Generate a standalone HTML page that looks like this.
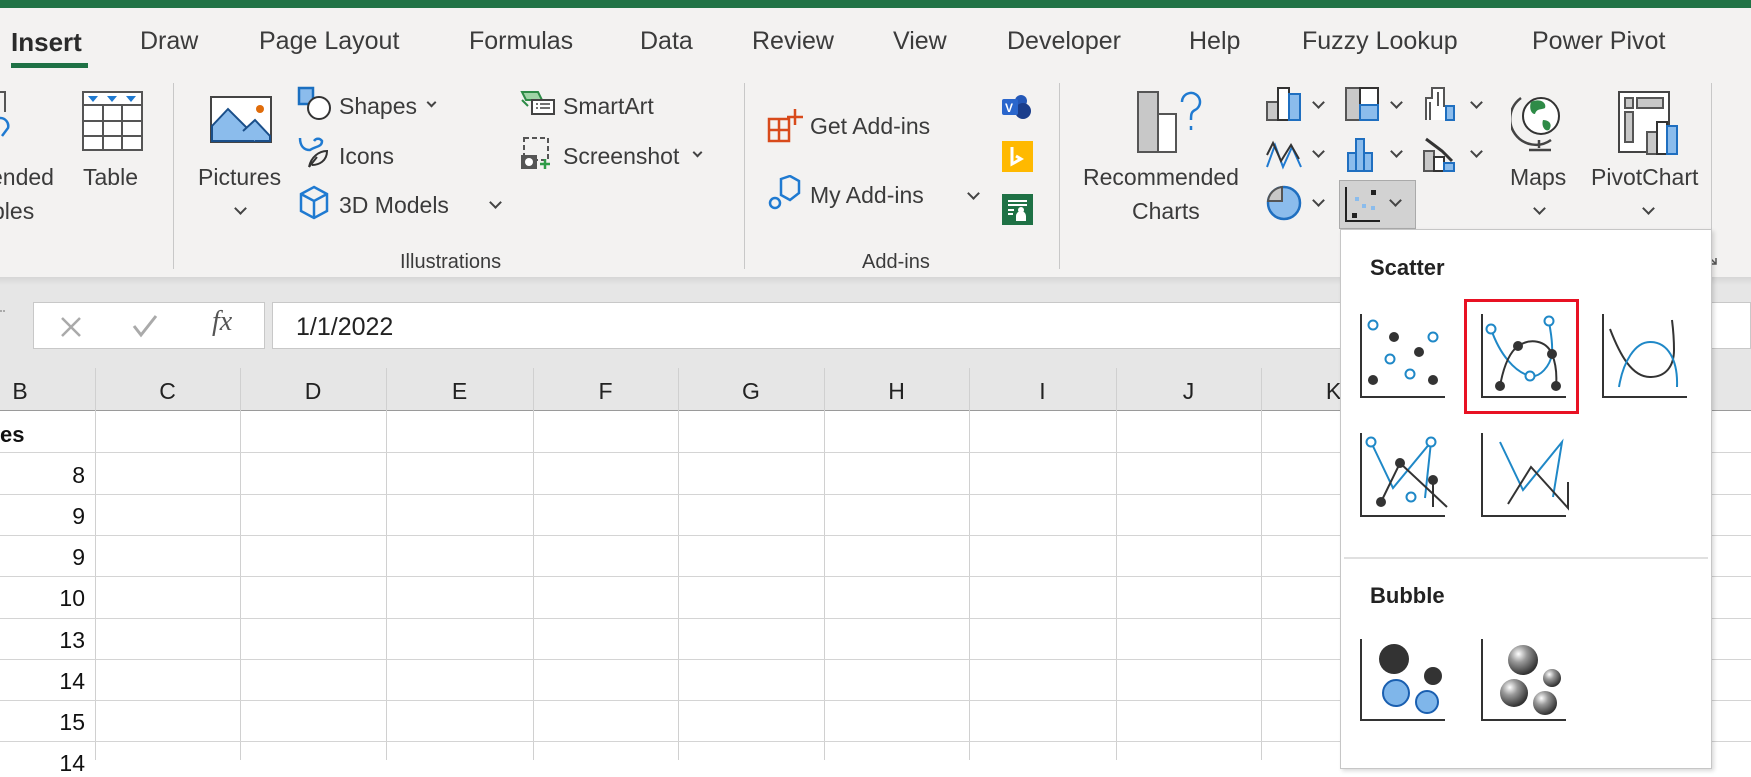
<!DOCTYPE html>
<html><head><meta charset="utf-8"><style>
*{margin:0;padding:0;box-sizing:border-box}
body{width:1751px;height:760px;overflow:hidden;background:#fff;position:relative;font-family:"Liberation Sans",sans-serif;color:#3b3b3b}
.a{position:absolute;white-space:nowrap}
.tab{position:absolute;top:27px;font-size:25px;color:#3b3b3b}
.rt{position:absolute;font-size:23px;color:#3b3b3b;white-space:nowrap}
.chev{position:absolute;width:9px;height:9px;border-right:2px solid #444;border-bottom:2px solid #444;transform:rotate(45deg)}
.col{position:absolute;top:368px;height:43px;font-size:23px;color:#222;text-align:center;line-height:46px}
.num{position:absolute;right:1666px;font-size:23px;color:#111}
</style></head><body>
<div class="a" style="left:0;top:0;width:1751px;height:8px;background:#217346"></div>
<div class="a" style="left:0;top:8px;width:1751px;height:270px;background:#f3f2f1"></div>
<div class="a" style="left:0;top:277px;width:1751px;height:8px;background:linear-gradient(#d6d6d6,#e6e6e6)"></div>
<div class="tab" style="left:11px;font-weight:bold;color:#2b2b2b;font-size:26px">Insert</div>
<div class="a" style="left:11px;top:63px;width:77px;height:5px;background:#1e7145"></div>
<div class="tab" style="left:140px">Draw</div>
<div class="tab" style="left:259px">Page Layout</div>
<div class="tab" style="left:469px">Formulas</div>
<div class="tab" style="left:640px">Data</div>
<div class="tab" style="left:752px">Review</div>
<div class="tab" style="left:893px">View</div>
<div class="tab" style="left:1007px">Developer</div>
<div class="tab" style="left:1189px">Help</div>
<div class="tab" style="left:1302px">Fuzzy Lookup</div>
<div class="tab" style="left:1532px">Power Pivot</div>

<div class="a" style="left:173px;top:83px;width:1px;height:186px;background:#c8c8c8"></div>
<div class="a" style="left:744px;top:83px;width:1px;height:186px;background:#c8c8c8"></div>
<div class="a" style="left:1059px;top:83px;width:1px;height:186px;background:#c8c8c8"></div>
<div class="a" style="left:1711px;top:83px;width:1px;height:186px;background:#c8c8c8"></div>

<svg class="a" style="left:0;top:90px" width="20" height="60"><path d="M0 2h5v20" fill="none" stroke="#555" stroke-width="2"/><path d="M0 28a8 8 0 0 1 8 10l-6 8" fill="none" stroke="#1f7ad1" stroke-width="2.5"/></svg>
<div class="rt" style="left:-10px;top:164px">ended</div>
<div class="rt" style="left:-8px;top:198px">bles</div>
<svg class="a" style="left:82px;top:91px" width="61" height="60"><rect x="1" y="1" width="59" height="58" fill="#fff" stroke="#555" stroke-width="2"/><path d="M1 14h59M1 30h59M1 45h59M21 14v45M40 14v45" stroke="#555" stroke-width="2"/><path d="M6 5h10l-5 6zM25 5h10l-5 6zM44 5h10l-5 6z" fill="#1f7ad1"/></svg>
<div class="rt" style="left:83px;top:164px">Table</div>
<svg class="a" style="left:210px;top:96px" width="62" height="48"><rect x="1" y="1" width="60" height="45" fill="#fff" stroke="#444" stroke-width="2"/><path d="M2 45V30L18 13L50 45z" fill="#8bbcec" stroke="#1a4f8a" stroke-width="2"/><path d="M33 35L45 24L60 40V45H45" fill="#8bbcec" stroke="#1a4f8a" stroke-width="2"/><circle cx="50" cy="13" r="4" fill="#e06c0a"/></svg>
<div class="rt" style="left:198px;top:164px">Pictures</div>
<div class="chev" style="left:236px;top:204px"></div>
<svg class="a" style="left:297px;top:86px" width="36" height="36"><rect x="2" y="2" width="14" height="16" fill="#8bbcec" stroke="#1a6fc0" stroke-width="2.5"/><circle cx="22" cy="22" r="11" fill="#fff" stroke="#333" stroke-width="2"/></svg>
<div class="rt" style="left:339px;top:93px">Shapes</div>
<div class="chev" style="left:428px;top:99px;width:7px;height:7px"></div>
<svg class="a" style="left:297px;top:135px" width="34" height="36"><path d="M3 3c0 8 4 12 10 12c6-4 12-3 12-9c-2-3-6-3-8 0" fill="none" stroke="#1f7ad1" stroke-width="2.5"/><path d="M12 32c2-10 10-16 18-16c0 10-8 14-15 14M12 32l8-10" fill="none" stroke="#333" stroke-width="2"/></svg>
<div class="rt" style="left:339px;top:143px">Icons</div>
<svg class="a" style="left:298px;top:185px" width="32" height="36"><path d="M16 2L29 9V26L16 33L3 26V9z M3 9L16 16L29 9M16 16V33" fill="none" stroke="#1f7ad1" stroke-width="2.5"/></svg>
<div class="rt" style="left:339px;top:192px">3D Models</div>
<div class="chev" style="left:491px;top:198px"></div>
<svg class="a" style="left:520px;top:90px" width="36" height="26"><path d="M2 2h16l4 8H6z" fill="#9fd4a6" stroke="#2e8b47" stroke-width="2"/><path d="M2 10l6 6" stroke="#2e8b47" stroke-width="2"/><rect x="12" y="10" width="22" height="14" fill="#fff" stroke="#444" stroke-width="2"/><path d="M16 14h2M20 14h10M16 18h2M20 18h10" stroke="#444" stroke-width="1.5"/></svg>
<div class="rt" style="left:563px;top:93px">SmartArt</div>
<svg class="a" style="left:520px;top:136px" width="36" height="36"><rect x="4" y="2" width="24" height="22" fill="none" stroke="#555" stroke-width="2" stroke-dasharray="5 3"/><rect x="1" y="19" width="16" height="14" fill="#555"/><circle cx="9" cy="26" r="4" fill="#fff"/><path d="M20 28h10M25 23v10" stroke="#2e9b47" stroke-width="2.5"/></svg>
<div class="rt" style="left:563px;top:143px">Screenshot</div>
<div class="chev" style="left:694px;top:149px;width:7px;height:7px"></div>
<div class="rt" style="left:400px;top:251px;font-size:20px">Illustrations</div>
<svg class="a" style="left:767px;top:107px" width="36" height="36"><path d="M2 12h20v22H2zM2 23h20M12 12v22" fill="none" stroke="#d84a1b" stroke-width="2.5"/><path d="M28 2v16M20 10h16" stroke="#d84a1b" stroke-width="2.5"/></svg>
<div class="rt" style="left:810px;top:113px">Get Add-ins</div>
<svg class="a" style="left:767px;top:175px" width="36" height="36"><path d="M14 4l9-3l9 5v12l-9 7l-9-5z" fill="none" stroke="#1f7ad1" stroke-width="2.5"/><circle cx="8" cy="28" r="5" fill="none" stroke="#1f7ad1" stroke-width="2.5"/></svg>
<div class="rt" style="left:810px;top:182px">My Add-ins</div>
<div class="chev" style="left:969px;top:189px"></div>
<svg class="a" style="left:1001px;top:92px" width="32" height="30"><circle cx="20" cy="9" r="6" fill="#2458b8"/><circle cx="22" cy="19" r="8" fill="#1a3e8c"/><rect x="1" y="7" width="16" height="16" rx="2" fill="#2a66cc"/><text x="4" y="20" font-size="12" fill="#fff" font-family="Liberation Sans" font-weight="bold">V</text></svg>
<div class="a" style="left:1002px;top:141px;width:31px;height:31px;background:#ffb900"><svg width="31" height="31"><path d="M10 6v17l9-5l-5-3" fill="none" stroke="#fff" stroke-width="3"/></svg></div>
<div class="a" style="left:1002px;top:194px;width:31px;height:31px;background:#1e7145"><svg width="31" height="31"><path d="M6 7h19M6 11h19" stroke="#fff" stroke-width="2"/><circle cx="19" cy="16" r="3" fill="#fff"/><path d="M14 27v-5a5 5 0 0 1 10 0v5z" fill="#fff"/><path d="M6 16h6M6 20h5" stroke="#fff" stroke-width="2"/></svg></div>
<div class="rt" style="left:862px;top:251px;font-size:20px">Add-ins</div>
<svg class="a" style="left:1136px;top:88px" width="70" height="66"><rect x="2" y="4" width="20" height="60" fill="#c8c8c8" stroke="#555" stroke-width="2"/><rect x="22" y="26" width="18" height="38" fill="#fff" stroke="#555" stroke-width="2"/><path d="M46 14a9 9 0 1 1 13 8c-4 2-4 5-4 10M55 38v4" fill="none" stroke="#1f7ad1" stroke-width="2.5"/></svg>
<div class="rt" style="left:1083px;top:164px">Recommended</div>
<div class="rt" style="left:1132px;top:198px">Charts</div>
<svg class="a" style="left:1265px;top:86px" width="38" height="36"><rect x="2" y="16" width="11" height="18" fill="#c8c8c8" stroke="#555" stroke-width="2"/><rect x="13" y="2" width="11" height="32" fill="#fff" stroke="#333" stroke-width="2"/><rect x="24" y="8" width="11" height="26" fill="#8bbcec" stroke="#1f6fc0" stroke-width="2"/></svg>
<div class="chev" style="left:1314px;top:98px"></div>
<svg class="a" style="left:1344px;top:86px" width="38" height="36"><rect x="2" y="2" width="14" height="32" fill="#c8c8c8" stroke="#555" stroke-width="2"/><rect x="16" y="2" width="18" height="32" fill="#fff" stroke="#333" stroke-width="2"/><rect x="16" y="19" width="18" height="15" fill="#8bbcec" stroke="#1f6fc0" stroke-width="2"/></svg>
<div class="chev" style="left:1392px;top:98px"></div>
<svg class="a" style="left:1422px;top:86px" width="38" height="36"><path d="M4 34V12h6V2h12v18h6v14" fill="#fff" stroke="#555" stroke-width="2"/><path d="M8 34V16M16 6v14" stroke="#555" stroke-width="2"/><rect x="24" y="20" width="8" height="14" fill="#8bbcec" stroke="#1f6fc0" stroke-width="2"/></svg>
<div class="chev" style="left:1472px;top:98px"></div>
<svg class="a" style="left:1265px;top:135px" width="38" height="38"><path d="M2 32L10 10l8 22l9-20l9 20" fill="none" stroke="#1f7ad1" stroke-width="2"/><path d="M2 20L8 8l8 18l10-16l8 14" fill="none" stroke="#333" stroke-width="2"/></svg>
<div class="chev" style="left:1314px;top:147px"></div>
<svg class="a" style="left:1344px;top:135px" width="38" height="38"><path d="M4 36V18h8V4h8v14h8v18zM12 18v18M20 18v18" fill="#8bbcec" stroke="#1f6fc0" stroke-width="2"/></svg>
<div class="chev" style="left:1392px;top:147px"></div>
<svg class="a" style="left:1422px;top:135px" width="38" height="38"><path d="M4 4l8 6l8 6l10 10" fill="none" stroke="#333" stroke-width="3"/><rect x="2" y="16" width="10" height="20" fill="#c8c8c8" stroke="#555" stroke-width="2"/><rect x="12" y="22" width="10" height="14" fill="#fff" stroke="#333" stroke-width="2"/><rect x="22" y="28" width="10" height="8" fill="#8bbcec" stroke="#1f6fc0" stroke-width="2"/></svg>
<div class="chev" style="left:1472px;top:147px"></div>
<svg class="a" style="left:1265px;top:184px" width="38" height="38"><circle cx="19" cy="19" r="16" fill="#8bbcec" stroke="#1f6fc0" stroke-width="2.5"/><path d="M17 3A16 16 0 0 0 3 17H17z" fill="#c8c8c8" stroke="#555" stroke-width="2"/></svg>
<div class="chev" style="left:1314px;top:196px"></div>
<div class="a" style="left:1339px;top:180px;width:77px;height:49px;background:#d2d2d2;border:1px solid #aaa"></div>
<svg class="a" style="left:1343px;top:185px" width="40" height="40"><path d="M3 2v34h34" fill="none" stroke="#222" stroke-width="2"/><rect x="28" y="5" width="5" height="5" fill="#222"/><rect x="9" y="28" width="5" height="5" fill="#222"/><rect x="12" y="12" width="4" height="4" fill="#8bbcec"/><rect x="19" y="19" width="4" height="4" fill="#8bbcec"/><rect x="28" y="21" width="4" height="4" fill="#8bbcec"/></svg>
<div class="chev" style="left:1391px;top:196px"></div>
<svg class="a" style="left:1511px;top:88px" width="54" height="66"><path d="M10 10a24 24 0 0 0 30 42" fill="none" stroke="#444" stroke-width="2.5"/><circle cx="30" cy="28" r="18" fill="#fff" stroke="#333" stroke-width="2"/><path d="M20 14c8-4 16 0 14 6c-4 2-8 0-10 6c-4 0-6-6-4-12zM32 32c6 0 10 4 6 10c-4 2-8-4-6-10z" fill="#2e8b47"/><path d="M28 52v8M18 62h22" stroke="#444" stroke-width="2.5"/></svg>
<div class="rt" style="left:1510px;top:164px">Maps</div>
<div class="chev" style="left:1535px;top:204px"></div>
<svg class="a" style="left:1617px;top:90px" width="68" height="66"><rect x="2" y="2" width="50" height="60" fill="#fff" stroke="#444" stroke-width="2"/><rect x="8" y="8" width="8" height="10" fill="#c8c8c8" stroke="#555" stroke-width="2"/><rect x="20" y="8" width="26" height="10" fill="#c8c8c8" stroke="#555" stroke-width="2"/><rect x="8" y="22" width="8" height="30" fill="#c8c8c8" stroke="#555" stroke-width="2"/><rect x="30" y="42" width="10" height="22" fill="#c8c8c8" stroke="#555" stroke-width="2"/><rect x="40" y="32" width="10" height="32" fill="#fff" stroke="#333" stroke-width="2"/><rect x="50" y="36" width="10" height="28" fill="#8bbcec" stroke="#1f6fc0" stroke-width="2"/></svg>
<div class="rt" style="left:1591px;top:164px">PivotChart</div>
<div class="chev" style="left:1644px;top:204px"></div>
<svg class="a" style="left:1704px;top:252px" width="14" height="14"><path d="M2 2v10h10M4 4l8 8M12 6v6H6" fill="none" stroke="#555" stroke-width="1.5"/></svg>

<div class="a" style="left:0;top:285px;width:1751px;height:83px;background:#e6e6e6"></div>
<div class="a" style="left:0;top:310px;width:3px;height:28px;border-top:2px dotted #aaa"></div>
<div class="a" style="left:33px;top:302px;width:232px;height:47px;background:#fff;border:1px solid #c8c8c8"></div>
<svg class="a" style="left:60px;top:316px" width="22" height="22"><path d="M2 2l18 18M20 2L2 20" stroke="#aaa" stroke-width="2.5"/></svg>
<svg class="a" style="left:132px;top:314px" width="26" height="24"><path d="M2 12l7 9L24 2" fill="none" stroke="#aaa" stroke-width="3"/></svg>
<div class="a" style="left:212px;top:306px;font-family:'Liberation Serif',serif;font-style:italic;font-size:28px;color:#555">fx</div>
<div class="a" style="left:272px;top:302px;width:1479px;height:47px;background:#fff;border:1px solid #c8c8c8"></div>
<div class="a" style="left:296px;top:313px;font-size:25px;color:#222">1/1/2022</div>

<div class="a" style="left:0;top:368px;width:1751px;height:43px;background:#e6e6e6;border-bottom:1px solid #9a9a9a"></div>
<div class="col" style="left:0;width:40px">B</div>
<div class="col" style="left:95px;width:145px">C</div>
<div class="col" style="left:240px;width:146px">D</div>
<div class="col" style="left:386px;width:147px">E</div>
<div class="col" style="left:533px;width:145px">F</div>
<div class="col" style="left:678px;width:146px">G</div>
<div class="col" style="left:824px;width:145px">H</div>
<div class="col" style="left:969px;width:147px">I</div>
<div class="col" style="left:1116px;width:145px">J</div>
<div class="col" style="left:1261px;width:145px">K</div>
<svg class="a" style="left:0;top:368px" width="1751" height="392">
<path d="M95.5 0V392M240.5 0V392M386.5 0V392M533.5 0V392M678.5 0V392M824.5 0V392M969.5 0V392M1116.5 0V392M1261.5 0V392" stroke="#d0d0d0"/>
<path d="M0 84.5H1751M0 126.5H1751M0 167.5H1751M0 208.5H1751M0 250.5H1751M0 291.5H1751M0 332.5H1751M0 373.5H1751" stroke="#d4d4d4"/>
</svg>
<div class="a" style="left:0;top:422px;font-size:22px;font-weight:bold;color:#111">es</div>
<div class="num" style="top:462px">8</div>
<div class="num" style="top:503px">9</div>
<div class="num" style="top:544px">9</div>
<div class="num" style="top:585px">10</div>
<div class="num" style="top:627px">13</div>
<div class="num" style="top:668px">14</div>
<div class="num" style="top:709px">15</div>
<div class="num" style="top:750px">14</div>

<div class="a" style="left:1340px;top:229px;width:372px;height:540px;background:#fff;border:1px solid #c6c6c6;box-shadow:2px 2px 4px rgba(0,0,0,.15)"></div>
<div class="a" style="left:1370px;top:255px;font-size:22px;font-weight:bold;color:#222">Scatter</div>
<div class="a" style="left:1464px;top:299px;width:115px;height:115px;border:3px solid #e81123"></div>
<svg class="a" style="left:1340px;top:300px" width="372" height="460" fill="none">
<g stroke="#333" stroke-width="2"><path d="M21 14V97H105M142 14V97H226M263 14V97H347"/>
<path d="M21 133V216H105M142 133V216H226"/><path d="M21 339V420H105M142 339V420H226"/></g>
<!-- icon1 -->
<g fill="#333"><circle cx="54" cy="37" r="5"/><circle cx="79" cy="52" r="5"/><circle cx="33" cy="80" r="5"/><circle cx="93" cy="80" r="5"/></g>
<g stroke="#1f88c7" stroke-width="2" fill="#fff"><circle cx="33" cy="25" r="4.5"/><circle cx="93" cy="37" r="4.5"/><circle cx="50" cy="59" r="4.5"/><circle cx="70" cy="74" r="4.5"/></g>
<!-- icon2 -->
<path d="M151 29C160 55 175 72 190 76C200 78 210 66 212 54C213 40 210 30 209 21" stroke="#1f88c7" stroke-width="2"/>
<path d="M160 86C164 64 170 52 178 46C190 38 206 40 212 54C216 64 217 75 216 86" stroke="#333" stroke-width="2"/>
<g fill="#333"><circle cx="160" cy="86" r="5"/><circle cx="178" cy="46" r="5"/><circle cx="212" cy="54" r="5"/><circle cx="216" cy="86" r="5"/></g>
<g stroke="#1f88c7" stroke-width="2" fill="#fff"><circle cx="151" cy="29" r="4.5"/><circle cx="209" cy="21" r="4.5"/><circle cx="190" cy="76" r="4.5"/></g>
<!-- icon3 -->
<path d="M270 29C280 55 292 77 310 77C326 77 334 66 334 50C334 38 333 28 332 20" stroke="#333" stroke-width="2"/>
<path d="M279 87C283 62 295 42 310 42C328 42 338 60 337 87" stroke="#1f88c7" stroke-width="2"/>
<!-- icon4 -->
<path d="M31 142L53 188L91 142L85 198" stroke="#1f88c7" stroke-width="2"/>
<path d="M41 202L60 163L107 207M93 180V207" stroke="#333" stroke-width="2"/>
<g fill="#333"><circle cx="41" cy="202" r="5"/><circle cx="60" cy="163" r="5"/><circle cx="93" cy="180" r="5"/></g>
<g stroke="#1f88c7" stroke-width="2" fill="#fff"><circle cx="31" cy="142" r="4.5"/><circle cx="91" cy="142" r="4.5"/><circle cx="71" cy="197" r="4.5"/></g>
<!-- icon5 -->
<path d="M160 142L183 190L222 142L213 197" stroke="#1f88c7" stroke-width="2"/>
<path d="M168 204L191 167L228 208V182" stroke="#333" stroke-width="2"/>
<!-- bubbles -->
<circle cx="54" cy="359" r="15" fill="#333"/><circle cx="93" cy="376" r="9" fill="#333"/>
<circle cx="56" cy="393" r="13" fill="#7fb6ea" stroke="#1a5fb0" stroke-width="2"/><circle cx="87" cy="402" r="11" fill="#7fb6ea" stroke="#1a5fb0" stroke-width="2"/>
<defs><radialGradient id="g" cx=".35" cy=".3" r=".7"><stop offset="0" stop-color="#fff"/><stop offset=".4" stop-color="#999"/><stop offset="1" stop-color="#333"/></radialGradient></defs>
<circle cx="183" cy="360" r="15" fill="url(#g)"/><circle cx="212" cy="378" r="9" fill="url(#g)"/><circle cx="174" cy="393" r="14" fill="url(#g)"/><circle cx="205" cy="403" r="12" fill="url(#g)"/>
</svg>
<div class="a" style="left:1344px;top:557px;width:364px;height:2px;background:#e0e0e0"></div>
<div class="a" style="left:1370px;top:583px;font-size:22px;font-weight:bold;color:#222">Bubble</div>
</body></html>
